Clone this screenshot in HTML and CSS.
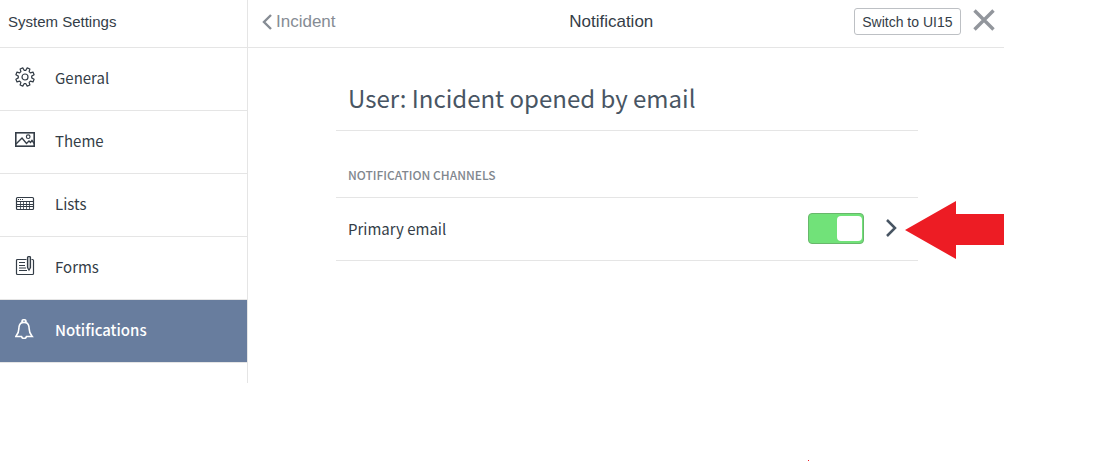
FILE: index.html
```html
<!DOCTYPE html>
<html lang="en">
<head>
<meta charset="UTF-8" />
<meta name="viewport" content="width=device-width, initial-scale=1" />
<title>System Settings</title>
<link rel="stylesheet" href="styles.css">
</head>
<body>

<div class="settings">
  <aside class="sidebar">
    <h2 class="sidebar-title">System Settings</h2>
    <nav class="tabs">
      <a class="tab" href="#general">
        <svg class="tab-icon" viewBox="0 0 20 20">
          <path d="M10.9 3.3 12.2.9 14.9 2 14.1 4.6 15.4 5.9 18 5.1 19.1 7.8 16.7 9.1V10.9L19.1 12.2 18 14.9 15.4 14.1 14.1 15.4 14.9 18 12.2 19.1 10.9 16.7H9.1L7.8 19.1 5.1 18 5.9 15.4 4.6 14.1 2 14.9.9 12.2 3.3 10.9V9.1L.9 7.8 2 5.1 4.6 5.9 5.9 4.6 5.1 2 7.8.9 9.1 3.3Z" stroke-linejoin="round"/>
          <circle cx="10" cy="10" r="3"/>
        </svg>
        General
      </a>
      <a class="tab" href="#theme">
        <svg class="tab-icon" viewBox="0 0 20 20">
          <rect x=".8" y="2.8" width="18.4" height="13.4" stroke-width="1.6"/>
          <path d="M1 14 7 8l4.500 5.500L14 11l1.500 1.500 1.500-2 2.300 3" stroke-width="1.400"/>
          <circle cx="13.2" cy="6.7" r="1.8"/>
        </svg>
        Theme
      </a>
      <a class="tab" href="#lists">
        <svg class="tab-icon" viewBox="0 0 20 20">
          <rect x="1.5" y="4.5" width="17" height="12" rx="1"/>
          <path d="M1.5 8.5h17M1.5 11.5h17M1.5 13.5h17"/>
          <path d="M5.5 8.5v8M8.5 8.5v8M11.5 8.5v8M14.5 8.5v8" stroke-width=".8"/>
          <path d="M3 6.5h1M5 6.5h1M7 6.5h1"/>
        </svg>
        Lists
      </a>
      <a class="tab" href="#forms">
        <svg class="tab-icon" viewBox="0 0 20 20">
          <path d="M11.5 3.5h-9q-1 0-1 1v13q0 1 1 1h15q1 0 1-1v-13q0-1-1-1h-1"/>
          <path d="M4 6.5h6M4 9.5h6M4 12h7M4 14.5h8"/>
          <path d="M12.5 1.5q0-.8.8-.8h1.4q.8 0 .8.8v10L14 14l-1.5-2.5Z"/>
          <path d="M14 1v11" stroke-width=".6"/>
        </svg>
        Forms
      </a>
      <a class="tab active" href="#notifications">
        <svg class="tab-icon" viewBox="0 0 20 20">
          <path d="M7 3.5Q3.8 5 3.8 10c0 4-1 5-3 7.5h5.7q.6 2 2.5 2t2.5-2h5.7c-2-2.5-3-3.5-3-7.5q0-5-3.2-6.5M7 3.8V2.2Q7 .7 9 .7t2 1.5v1.6Q9 3 7 3.8Z" stroke-width="1.6"/>
        </svg>
        Notifications
      </a>
    </nav>
  </aside>

  <main class="panel">
    <header class="panel-header">
      <div class="header-bar">
        <a class="back" href="#incident">
          <svg class="back-icon" viewBox="0 0 10 16"><path d="M9 1 2 8l7 7"/></svg>
          Incident
        </a>
        <h1 class="panel-title">Notification</h1>
        <div class="actions">
          <button class="switch-btn" type="button">Switch to UI15</button>
        </div>
      </div>
      <button class="close-btn" type="button" aria-label="Close">
        <svg viewBox="0 0 22 22"><path d="M1.5 1.5l19 19M20.5 1.5l-19 19"/></svg>
      </button>
    </header>

    <section class="content">
      <h2 class="content-title">User: Incident opened by email</h2>
      <h3 class="group-title">NOTIFICATION CHANNELS</h3>
      <div class="channel">
        <label class="channel-name" for="primaryEmail">Primary email</label>
        <input class="toggle" type="checkbox" id="primaryEmail" checked />
        <button class="details-btn" type="button" aria-label="Primary email details">
          <svg viewBox="0 0 12 20"><path d="M2 2l8 8-8 8"/></svg>
        </button>
        <svg class="arrow" viewBox="0 0 99 58"><path d="M0 29 51 0v13h48v31H51v14Z"/></svg>
      </div>
    </section>
  </main>
</div>

<span class="red-dot"></span>

</body>
</html>
```

FILE: styles.css
```css
* { box-sizing: border-box; }
body {
  margin: 0;
  background: #fff;
  color: #343d47;
  font-family: "Noto Sans CJK SC", "Open Sans", sans-serif;
  font-size: 15px;
}
h1, h2, h3 { margin: 0; font-weight: 400; }
a { color: inherit; text-decoration: none; }
svg { display: block; fill: none; stroke: currentColor; }
button {
  padding: 0;
  border: none;
  background: none;
  cursor: pointer;
}
.settings {
  display: flex;
  width: 90%;
}

/* Sidebar */
.sidebar {
  flex: 0 0 248px;
  padding-bottom: 20px;
  border-right: 1px solid #e5e5e5;
}
.sidebar-title {
  height: 48px;
  padding-left: 8px;
  border-bottom: 1px solid #e5e5e5;
  font: 15px/44px "Liberation Sans", Arial, sans-serif;
}
.tab {
  display: flex;
  align-items: center;
  gap: 20px;
  height: 63px;
  padding: 0 0 4px 15px;
  border-bottom: 1px solid #e5e5e5;
}
.tab-icon {
  width: 20px;
  height: 20px;
  stroke-width: 1.2;
}
.tab.active {
  background: #687d9e;
  color: #fff;
  font-weight: 500;
}

/* Panel */
.panel { flex: 1; }
.panel-header {
  display: flex;
  align-items: center;
  gap: 12px;
  height: 48px;
  padding: 0 9px 4px 14px;
  border-bottom: 1px solid #e5e5e5;
  font: 17px/20px "Liberation Sans", Arial, sans-serif;
}
.header-bar {
  flex: 1;
  display: flex;
  align-items: center;
}
.back {
  flex: 1;
  display: flex;
  align-items: center;
  gap: 4px;
  color: #868c94;
}
.back-icon {
  width: 10px;
  height: 16px;
  stroke-width: 2.4;
}
.panel-title { font-size: 17px; }
.actions {
  flex: 1;
  display: flex;
  justify-content: flex-end;
}
.switch-btn {
  height: 27px;
  padding: 0 7px;
  border: 1px solid #bdc0c4;
  border-radius: 3px;
  color: #343d47;
  font: 14px "Liberation Sans", Arial, sans-serif;
}
.close-btn {
  width: 22px;
  height: 22px;
  margin-bottom: 4px;
  color: #92969c;
  stroke-width: 3.4;
}

/* Content */
.content { padding: 32px 86px 0 88px; }
.content-title {
  padding: 0 12px 14px;
  border-bottom: 1px solid #e5e5e5;
  color: #485563;
  font-size: 24px;
  line-height: 36px;
}
.group-title {
  padding: 32px 12px 10px;
  border-bottom: 1px solid #e5e5e5;
  color: #81878e;
  font-size: 12px;
  font-weight: 500;
  line-height: 24px;
}
.channel {
  position: relative;
  display: flex;
  align-items: center;
  height: 63px;
  padding: 0 21px 2px 12px;
  border-bottom: 1px solid #e5e5e5;
}
.channel-name { flex: 1; }
.toggle {
  appearance: none;
  width: 56px;
  height: 31px;
  margin: 0 21px 0 0;
  padding: 2px 1px;
  border: 1px solid #68b76b;
  border-radius: 4px;
  background: #71e279;
  cursor: pointer;
}
.toggle::before {
  content: "";
  display: block;
  width: 25px;
  height: 25px;
  border-radius: 4px;
  background: #fff;
}
.toggle:checked::before { margin-left: auto; }
.details-btn {
  width: 12px;
  height: 20px;
  color: #485563;
  stroke-width: 2.5;
}
.arrow {
  position: absolute;
  top: 3px;
  right: -86px;
  width: 99px;
  height: 58px;
  fill: #ed1c24;
  stroke: none;
}
.red-dot {
  position: absolute;
  top: 460px;
  left: 808px;
  width: 1px;
  height: 1px;
  background: #ed1c24;
}
```
